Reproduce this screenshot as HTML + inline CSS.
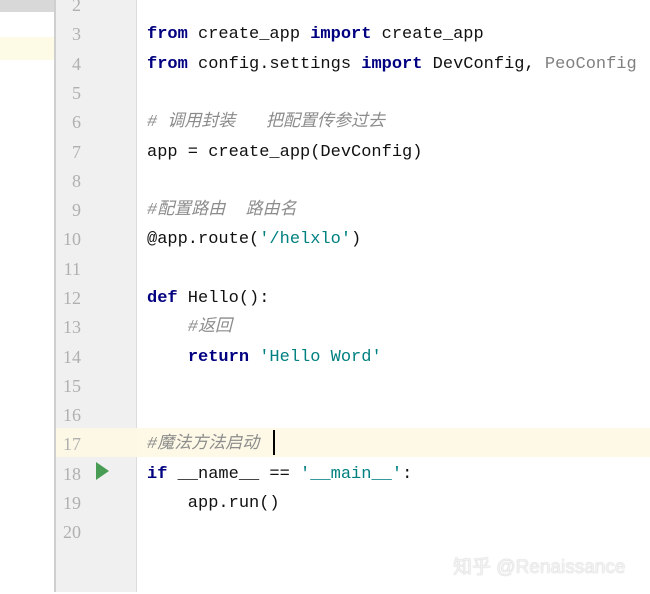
<!DOCTYPE html><html><head><meta charset="utf-8"><style>
body{margin:0;width:650px;height:592px;overflow:hidden;background:#fff;position:relative;font-family:"Liberation Mono","Noto Sans CJK SC",monospace;}
.w{position:absolute;left:0;top:2px;width:650px;height:592px}
.l{position:absolute;left:147px;height:29px;line-height:29px;font-size:17px;color:#111;white-space:pre}
.n{position:absolute;left:56px;width:25px;text-align:right;height:29px;line-height:29px;font-size:18px;color:#b0b0b0;font-family:"Liberation Serif",serif}
.k{color:#000080;font-weight:bold}
.c{color:#8c8c8c;font-style:italic;font-family:"Liberation Mono","Noto Sans CJK SC",monospace}
.s{color:#008080}
.g{color:#808080}
</style></head><body>
<div style="position:absolute;left:0;top:0;width:54px;height:12px;background:#d8d8d8"></div>
<div style="position:absolute;left:0;top:37px;width:54px;height:23px;background:#fdfbe6"></div>
<div style="position:absolute;left:54px;top:0;width:2px;height:592px;background:#cfcfcf"></div>
<div style="position:absolute;left:56px;top:0;width:80px;height:592px;background:#f0f0f0"></div>
<div style="position:absolute;left:136px;top:0;width:1px;height:592px;background:#dcdcdc"></div>
<div style="position:absolute;left:56px;top:428px;width:594px;height:29px;background:#fcf8e5"></div>
<div style="position:absolute;left:137px;top:428px;width:513px;height:29px;background:#fdf9e6"></div>
<div class="w">
<div class="n" style="top:-11px">2</div>
<div class="n" style="top:18px">3</div><div class="l" style="top:18px"><span class="k">from</span> create_app <span class="k">import</span> create_app</div>
<div class="n" style="top:48px">4</div><div class="l" style="top:48px"><span class="k">from</span> config.settings <span class="k">import</span> DevConfig, <span class="g">PeoConfig</span></div>
<div class="n" style="top:77px">5</div>
<div class="n" style="top:106px">6</div><div class="l c" style="top:106px"># 调用封装   把配置传参过去</div>
<div class="n" style="top:136px">7</div><div class="l" style="top:136px">app = create_app(DevConfig)</div>
<div class="n" style="top:165px">8</div>
<div class="n" style="top:194px">9</div><div class="l c" style="top:194px">#配置路由  路由名</div>
<div class="n" style="top:223px">10</div><div class="l" style="top:223px">@app.route(<span class="s">'/helxlo'</span>)</div>
<div class="n" style="top:253px">11</div>
<div class="n" style="top:282px">12</div><div class="l" style="top:282px"><span class="k">def</span> Hello():</div>
<div class="n" style="top:311px">13</div><div class="l c" style="top:311px">    #返回</div>
<div class="n" style="top:341px">14</div><div class="l" style="top:341px">    <span class="k">return</span> <span class="s">'Hello Word'</span></div>
<div class="n" style="top:370px">15</div>
<div class="n" style="top:399px">16</div>
<div class="n" style="top:428px">17</div><div class="l c" style="top:428px">#魔法方法启动</div>
<div style="position:absolute;left:273px;top:428px;width:2px;height:25px;background:#000"></div>
<div class="n" style="top:458px">18</div><div class="l" style="top:458px"><span class="k">if</span> __name__ == <span class="s">'__main__'</span>:</div>
<svg style="position:absolute;left:96px;top:460px" width="14" height="18"><polygon points="0,0 13,9 0,18" fill="#499c54"/></svg>
<div class="n" style="top:487px">19</div><div class="l" style="top:487px">    app.run()</div>
<div class="n" style="top:516px">20</div>
</div>
<div style="position:absolute;left:453px;top:552px;font-family:'Liberation Sans','Noto Sans CJK SC',sans-serif;font-size:19px;color:#f2f2f2;text-shadow:0 0 1px #aaa">知乎 @Renaissance</div>
</body></html>
